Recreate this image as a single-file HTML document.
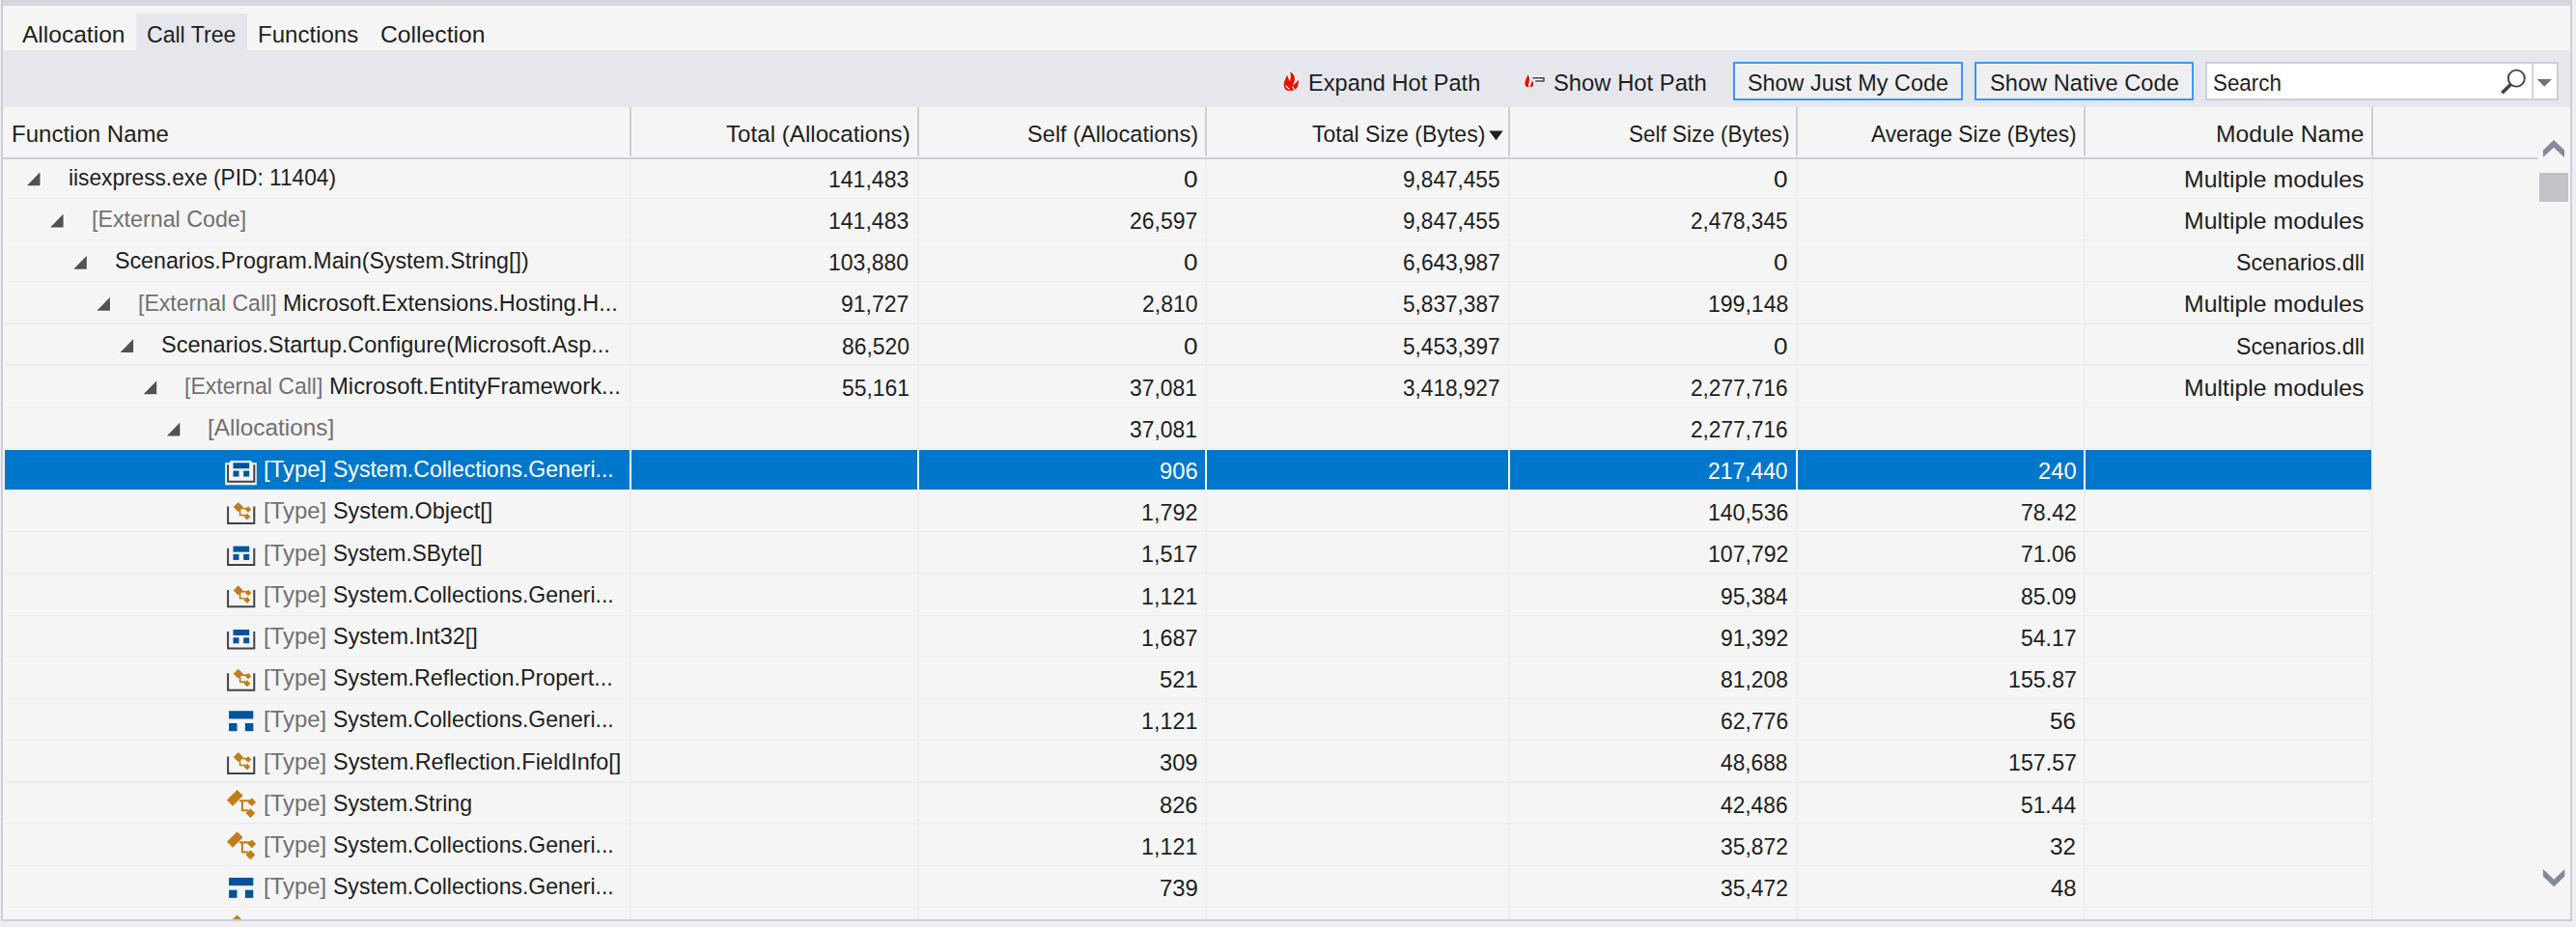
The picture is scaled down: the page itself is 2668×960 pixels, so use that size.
<!DOCTYPE html>
<html><head><meta charset="utf-8"><title>Call Tree</title>
<style>
html,body{margin:0;padding:0}
body{width:2668px;height:960px;overflow:hidden;position:relative;background:#eeeef3;font-family:"Liberation Sans",sans-serif}
.r{position:absolute}
.ov{position:absolute;left:0;top:0}
.t{position:absolute;font-size:24.5px;line-height:40px;white-space:nowrap;transform-origin:0 0}
</style></head><body>
<div class="r" style="left:3px;top:0px;width:2659px;height:6px;background:#d6d7dc;"></div><div class="r" style="left:3px;top:6px;width:2659px;height:46px;background:#f5f5f5;"></div><div class="r" style="left:141px;top:14px;width:115px;height:38px;background:#e6e7ed;"></div><div class="r" style="left:3px;top:52px;width:2659px;height:59px;background:#e6e7ed;"></div><div class="r" style="left:3px;top:111px;width:2659px;height:841px;background:#f5f5f5;"></div><div class="r" style="left:1px;top:0px;width:2px;height:954px;background:#cccedb;"></div><div class="r" style="left:2662px;top:0px;width:2px;height:954px;background:#cccedb;"></div><div class="r" style="left:1px;top:952px;width:2663px;height:2px;background:#cccedb;"></div><div class="r" style="left:652px;top:111px;width:2px;height:51px;background:#ccceda;"></div><div class="r" style="left:950px;top:111px;width:2px;height:51px;background:#ccceda;"></div><div class="r" style="left:1248px;top:111px;width:2px;height:51px;background:#ccceda;"></div><div class="r" style="left:1562px;top:111px;width:2px;height:51px;background:#ccceda;"></div><div class="r" style="left:1860px;top:111px;width:2px;height:51px;background:#ccceda;"></div><div class="r" style="left:2158px;top:111px;width:2px;height:51px;background:#ccceda;"></div><div class="r" style="left:2456px;top:111px;width:2px;height:51px;background:#ccceda;"></div><div class="r" style="left:3px;top:163px;width:2626px;height:2px;background:#cccedb;"></div><div class="r" style="left:5px;top:204.75px;width:2451px;height:1.3px;background:#ededed;"></div><div class="r" style="left:5px;top:247.93px;width:2451px;height:1.3px;background:#ededed;"></div><div class="r" style="left:5px;top:291.11px;width:2451px;height:1.3px;background:#ededed;"></div><div class="r" style="left:5px;top:334.29px;width:2451px;height:1.3px;background:#ededed;"></div><div class="r" style="left:5px;top:377.47px;width:2451px;height:1.3px;background:#ededed;"></div><div class="r" style="left:5px;top:420.65px;width:2451px;height:1.3px;background:#ededed;"></div><div class="r" style="left:5px;top:463.83px;width:2451px;height:1.3px;background:#ededed;"></div><div class="r" style="left:5px;top:507.01px;width:2451px;height:1.3px;background:#ededed;"></div><div class="r" style="left:5px;top:550.19px;width:2451px;height:1.3px;background:#ededed;"></div><div class="r" style="left:5px;top:593.37px;width:2451px;height:1.3px;background:#ededed;"></div><div class="r" style="left:5px;top:636.55px;width:2451px;height:1.3px;background:#ededed;"></div><div class="r" style="left:5px;top:679.73px;width:2451px;height:1.3px;background:#ededed;"></div><div class="r" style="left:5px;top:722.91px;width:2451px;height:1.3px;background:#ededed;"></div><div class="r" style="left:5px;top:766.09px;width:2451px;height:1.3px;background:#ededed;"></div><div class="r" style="left:5px;top:809.27px;width:2451px;height:1.3px;background:#ededed;"></div><div class="r" style="left:5px;top:852.45px;width:2451px;height:1.3px;background:#ededed;"></div><div class="r" style="left:5px;top:895.63px;width:2451px;height:1.3px;background:#ededed;"></div><div class="r" style="left:5px;top:938.81px;width:2451px;height:1.3px;background:#ededed;"></div><div class="r" style="left:5px;top:981.99px;width:2451px;height:1.3px;background:#ededed;"></div><div class="r" style="left:652px;top:165px;width:2px;height:787px;background:#eeeeee;"></div><div class="r" style="left:950px;top:165px;width:2px;height:787px;background:#eeeeee;"></div><div class="r" style="left:1248px;top:165px;width:2px;height:787px;background:#eeeeee;"></div><div class="r" style="left:1562px;top:165px;width:2px;height:787px;background:#eeeeee;"></div><div class="r" style="left:1860px;top:165px;width:2px;height:787px;background:#eeeeee;"></div><div class="r" style="left:2158px;top:165px;width:2px;height:787px;background:#eeeeee;"></div><div class="r" style="left:2456px;top:165px;width:2px;height:787px;background:#eeeeee;"></div><div class="r" style="left:5px;top:465px;width:2451px;height:43px;background:#fafafa;"></div><div class="r" style="left:5px;top:466px;width:647px;height:41px;background:#0177cc;"></div><div class="r" style="left:654px;top:466px;width:296px;height:41px;background:#0177cc;"></div><div class="r" style="left:952px;top:466px;width:296px;height:41px;background:#0177cc;"></div><div class="r" style="left:1250px;top:466px;width:312px;height:41px;background:#0177cc;"></div><div class="r" style="left:1564px;top:466px;width:296px;height:41px;background:#0177cc;"></div><div class="r" style="left:1862px;top:466px;width:296px;height:41px;background:#0177cc;"></div><div class="r" style="left:2160px;top:466px;width:296px;height:41px;background:#0177cc;"></div>
<svg class="ov" width="2668" height="960" viewBox="0 0 2668 960"><polygon points="25.30,193.60 42.80,176.00 42.80,193.60" fill="#ffffff" opacity="0.9"/><polygon points="27.90,192.30 41.50,178.30 41.50,192.30" fill="#525252"/><polygon points="49.45,236.78 66.95,219.18 66.95,236.78" fill="#ffffff" opacity="0.9"/><polygon points="52.05,235.48 65.65,221.48 65.65,235.48" fill="#525252"/><polygon points="73.60,279.96 91.10,262.36 91.10,279.96" fill="#ffffff" opacity="0.9"/><polygon points="76.20,278.66 89.80,264.66 89.80,278.66" fill="#525252"/><polygon points="97.75,323.14 115.25,305.54 115.25,323.14" fill="#ffffff" opacity="0.9"/><polygon points="100.35,321.84 113.95,307.84 113.95,321.84" fill="#525252"/><polygon points="121.90,366.32 139.40,348.72 139.40,366.32" fill="#ffffff" opacity="0.9"/><polygon points="124.50,365.02 138.10,351.02 138.10,365.02" fill="#525252"/><polygon points="146.05,409.50 163.55,391.90 163.55,409.50" fill="#ffffff" opacity="0.9"/><polygon points="148.65,408.20 162.25,394.20 162.25,408.20" fill="#525252"/><polygon points="170.20,452.68 187.70,435.08 187.70,452.68" fill="#ffffff" opacity="0.9"/><polygon points="172.80,451.38 186.40,437.38 186.40,451.38" fill="#525252"/><path d="M233.2 502.26 V479.26 H237.5 L239 476.96 H260 L261.5 479.26 H265.8 V502.26 Z" fill="#f5f5f5"/><path d="M236.1 481.36 V498.76 H263.3 V481.36" fill="none" stroke="#424242" stroke-width="2" stroke-linecap="butt"/><rect x="241.5" y="479.26" width="16.7" height="6" fill="#00539c"/><rect x="241.5" y="487.56" width="6" height="6" fill="#00539c"/><rect x="252.2" y="487.56" width="6" height="6" fill="#00539c"/><path d="M236.1 524.54 V541.94 H263.3 V524.54" fill="none" stroke="#424242" stroke-width="2" stroke-linecap="butt"/><path d="M248.6 525.44 V533.44 H254 M248.6 526.44 H256" fill="none" stroke="#c27d1a" stroke-width="1.6"/><rect x="243.20" y="521.44" width="7.20" height="7.20" fill="#c27d1a" transform="rotate(45 246.80 525.04)"/><rect x="254.80" y="525.24" width="4.60" height="4.60" fill="#c27d1a" transform="rotate(45 257.10 527.54)"/><rect x="253.50" y="532.64" width="4.80" height="4.80" fill="#c27d1a" transform="rotate(45 255.90 535.04)"/><path d="M236.1 567.72 V585.12 H263.3 V567.72" fill="none" stroke="#424242" stroke-width="2" stroke-linecap="butt"/><rect x="241.5" y="565.62" width="16.7" height="6" fill="#00539c"/><rect x="241.5" y="573.92" width="6" height="6" fill="#00539c"/><rect x="252.2" y="573.92" width="6" height="6" fill="#00539c"/><path d="M236.1 610.90 V628.30 H263.3 V610.90" fill="none" stroke="#424242" stroke-width="2" stroke-linecap="butt"/><path d="M248.6 611.80 V619.80 H254 M248.6 612.80 H256" fill="none" stroke="#c27d1a" stroke-width="1.6"/><rect x="243.20" y="607.80" width="7.20" height="7.20" fill="#c27d1a" transform="rotate(45 246.80 611.40)"/><rect x="254.80" y="611.60" width="4.60" height="4.60" fill="#c27d1a" transform="rotate(45 257.10 613.90)"/><rect x="253.50" y="619.00" width="4.80" height="4.80" fill="#c27d1a" transform="rotate(45 255.90 621.40)"/><path d="M236.1 654.08 V671.48 H263.3 V654.08" fill="none" stroke="#424242" stroke-width="2" stroke-linecap="butt"/><rect x="241.5" y="651.98" width="16.7" height="6" fill="#00539c"/><rect x="241.5" y="660.28" width="6" height="6" fill="#00539c"/><rect x="252.2" y="660.28" width="6" height="6" fill="#00539c"/><path d="M236.1 697.26 V714.66 H263.3 V697.26" fill="none" stroke="#424242" stroke-width="2" stroke-linecap="butt"/><path d="M248.6 698.16 V706.16 H254 M248.6 699.16 H256" fill="none" stroke="#c27d1a" stroke-width="1.6"/><rect x="243.20" y="694.16" width="7.20" height="7.20" fill="#c27d1a" transform="rotate(45 246.80 697.76)"/><rect x="254.80" y="697.96" width="4.60" height="4.60" fill="#c27d1a" transform="rotate(45 257.10 700.26)"/><rect x="253.50" y="705.36" width="4.80" height="4.80" fill="#c27d1a" transform="rotate(45 255.90 707.76)"/><rect x="237.1" y="736.24" width="25.2" height="8.2" fill="#00539c"/><rect x="237.1" y="748.94" width="8.4" height="8.2" fill="#00539c"/><rect x="253.9" y="748.94" width="8.4" height="8.2" fill="#00539c"/><path d="M236.1 783.62 V801.02 H263.3 V783.62" fill="none" stroke="#424242" stroke-width="2" stroke-linecap="butt"/><path d="M248.6 784.52 V792.52 H254 M248.6 785.52 H256" fill="none" stroke="#c27d1a" stroke-width="1.6"/><rect x="243.20" y="780.52" width="7.20" height="7.20" fill="#c27d1a" transform="rotate(45 246.80 784.12)"/><rect x="254.80" y="784.32" width="4.60" height="4.60" fill="#c27d1a" transform="rotate(45 257.10 786.62)"/><rect x="253.50" y="791.72" width="4.80" height="4.80" fill="#c27d1a" transform="rotate(45 255.90 794.12)"/><path d="M250.9 829.20 V839.30 H257 M248 829.20 H259" fill="none" stroke="#c27d1a" stroke-width="2.1"/><rect x="235.80" y="822.00" width="15.00" height="8.60" fill="#c27d1a" transform="rotate(-45 243.30 826.30)"/><rect x="257.70" y="827.60" width="6.20" height="6.20" fill="#c27d1a" transform="rotate(45 260.80 830.70)"/><rect x="255.90" y="838.60" width="7.00" height="7.00" fill="#c27d1a" transform="rotate(45 259.40 842.10)"/><path d="M250.9 872.38 V882.48 H257 M248 872.38 H259" fill="none" stroke="#c27d1a" stroke-width="2.1"/><rect x="235.80" y="865.18" width="15.00" height="8.60" fill="#c27d1a" transform="rotate(-45 243.30 869.48)"/><rect x="257.70" y="870.78" width="6.20" height="6.20" fill="#c27d1a" transform="rotate(45 260.80 873.88)"/><rect x="255.90" y="881.78" width="7.00" height="7.00" fill="#c27d1a" transform="rotate(45 259.40 885.28)"/><rect x="237.1" y="908.96" width="25.2" height="8.2" fill="#00539c"/><rect x="237.1" y="921.66" width="8.4" height="8.2" fill="#00539c"/><rect x="253.9" y="921.66" width="8.4" height="8.2" fill="#00539c"/><path d="M250.9 958.74 V968.84 H257 M248 958.74 H259" fill="none" stroke="#c27d1a" stroke-width="2.1"/><rect x="235.80" y="951.54" width="15.00" height="8.60" fill="#c27d1a" transform="rotate(-45 243.30 955.84)"/><rect x="257.70" y="957.14" width="6.20" height="6.20" fill="#c27d1a" transform="rotate(45 260.80 960.24)"/><rect x="255.90" y="968.14" width="7.00" height="7.00" fill="#c27d1a" transform="rotate(45 259.40 971.64)"/><polygon points="1542.3,135.5 1556.7,135.5 1549.5,145.3" fill="#1e1e1e"/><polygon points="2633.9,155.4 2644.9,145.1 2656,155.4 2656,162.9 2644.9,152.7 2633.9,162.9" fill="#868999"/><polygon points="2633.9,899.9 2645.1,910.7 2656.3,899.9 2656.3,907.5 2645.1,918.3 2633.9,907.5" fill="#868999"/><rect x="2630" y="179" width="30" height="30" fill="#c2c3c9"/><rect x="1796" y="65" width="236" height="38" fill="#efeff2" stroke="#3399ff" stroke-width="2"/><rect x="2046" y="65" width="225" height="38" fill="#efeff2" stroke="#3399ff" stroke-width="2"/><rect x="2285" y="65" width="364" height="38" fill="#ffffff" stroke="#cccedb" stroke-width="2"/><rect x="2622.2" y="66" width="1.8" height="36" fill="#cccedb"/><polygon points="2627.6,82 2642.9,82 2635.25,89.8" fill="#717171"/><circle cx="2606.3" cy="81.1" r="8.5" fill="none" stroke="#424242" stroke-width="1.9"/><line x1="2591.4" y1="96.3" x2="2600.8" y2="86.9" stroke="#424242" stroke-width="3.6"/><g transform="translate(1329.3,73.9) scale(1.0)"><path d="M3.2 19.5 C1.0 18.5 0 15.5 0.3 13 C0.6 9.5 2.8 7 3.6 3.1 C4.8 5 6 7.5 6.5 10 C7.5 7 7.8 3 6.9 0.1 C9.8 2 11.8 4.5 11.7 7.5 C11.6 10.5 10.6 12.5 9.8 14.5 C11.8 13 14 11 15.4 8.6 C16 12 15.5 15 14 17 C12.5 19 10 20 7.5 20 C5.5 20 4.2 19.9 3.2 19.5 Z" fill="#e51400" stroke="#ffffff" stroke-width="1.4" paint-order="stroke"/><path d="M2.3 14.6 C3.2 16.3 4.6 17.6 6.3 18.6 M9.2 15.6 C9.7 16.8 10.4 17.7 11.3 18.6 M4.2 3.6 C5.2 5.2 6.0 7.2 6.5 9.6" fill="none" stroke="#ffffff" stroke-width="1.1"/></g><g fill="#e51400" stroke="#ffffff" stroke-width="1.3" paint-order="stroke"><path d="M1580.6 89.8 C1579.0 88.2 1578.9 85.5 1580.0 82.8 C1580.8 80.9 1582.0 79.2 1582.1 77.1 C1583.6 78.6 1584.4 80.8 1584.1 83.4 C1583.8 85.4 1582.8 86.8 1583.0 88.6 C1583.1 89.4 1583.6 90.0 1584.2 90.2 C1583 90.4 1581.5 90.3 1580.6 89.8 Z"/><path d="M1586.6 83.1 C1588.4 84.9 1588.8 88.0 1587.2 89.7 C1586.6 90.2 1585.6 90.4 1584.6 90.3 C1585.0 89.3 1585.0 88.2 1585.5 87.2 C1586.1 86.0 1586.7 84.8 1586.6 83.1 Z"/></g><path d="M1587.5 80.8 H1599 V84.1 H1590.2" fill="none" stroke="#ffffff" stroke-width="3.2" opacity="0.7"/><path d="M1587.5 80.8 H1599 V84.1 H1590.2" fill="none" stroke="#424242" stroke-width="1.5"/></svg>
<div class="t" style="left:22.95px;top:15.80px;color:#1e1e1e;transform:scaleX(1.0020)">Allocation</div>
<div class="t" style="left:152.13px;top:15.80px;color:#1e1e1e;transform:scaleX(0.9413)">Call Tree</div>
<div class="t" style="left:267.03px;top:15.80px;color:#1e1e1e;transform:scaleX(0.9814)">Functions</div>
<div class="t" style="left:394.25px;top:15.80px;color:#1e1e1e;transform:scaleX(1.0080)">Collection</div>
<div class="t" style="left:1355.07px;top:66.00px;color:#1e1e1e;transform:scaleX(0.9624)">Expand Hot Path</div>
<div class="t" style="left:1608.72px;top:66.00px;color:#1e1e1e;transform:scaleX(0.9712)">Show Hot Path</div>
<div class="t" style="left:1809.94px;top:65.70px;color:#1e1e1e;transform:scaleX(0.9542)">Show Just My Code</div>
<div class="t" style="left:2060.73px;top:65.70px;color:#1e1e1e;transform:scaleX(0.9650)">Show Native Code</div>
<div class="t" style="left:2291.88px;top:65.90px;color:#1e1e1e;transform:scaleX(0.9128)">Search</div>
<div class="t" style="left:12.03px;top:119.00px;color:#1e1e1e;transform:scaleX(0.9807)">Function Name</div>
<div class="t" style="left:752.26px;top:119.00px;color:#1e1e1e;transform:scaleX(0.9865)">Total (Allocations)</div>
<div class="t" style="left:1063.63px;top:119.00px;color:#1e1e1e;transform:scaleX(0.9636)">Self (Allocations)</div>
<div class="t" style="left:1359.38px;top:119.00px;color:#1e1e1e;transform:scaleX(0.9408)">Total Size (Bytes)</div>
<div class="t" style="left:1686.88px;top:119.00px;color:#1e1e1e;transform:scaleX(0.9190)">Self Size (Bytes)</div>
<div class="t" style="left:1937.76px;top:119.00px;color:#1e1e1e;transform:scaleX(0.9258)">Average Size (Bytes)</div>
<div class="t" style="left:2295.08px;top:119.00px;color:#1e1e1e;transform:scaleX(1.0066)">Module Name</div>
<div class="t" style="left:70.68px;top:164.00px;color:#1e1e1e;transform:scaleX(0.9261)">iisexpress.exe (PID: 11404)</div>
<div class="t" style="left:858.25px;top:165.80px;color:#1e1e1e;transform:scaleX(0.9402)">141,483</div>
<div class="t" style="left:1225.78px;top:165.80px;color:#1e1e1e;transform:scaleX(1.0660)">0</div>
<div class="t" style="left:1453.24px;top:165.80px;color:#1e1e1e;transform:scaleX(0.9221)">9,847,455</div>
<div class="t" style="left:1837.38px;top:165.80px;color:#1e1e1e;transform:scaleX(1.0660)">0</div>
<div class="t" style="left:2261.86px;top:165.80px;color:#1e1e1e;transform:scaleX(1.0141)">Multiple modules</div>
<div class="t" style="left:95.34px;top:207.18px;color:#717171;transform:scaleX(0.9487)">[External Code]</div>
<div class="t" style="left:858.25px;top:208.98px;color:#1e1e1e;transform:scaleX(0.9402)">141,483</div>
<div class="t" style="left:1170.14px;top:208.98px;color:#1e1e1e;transform:scaleX(0.9383)">26,597</div>
<div class="t" style="left:1453.24px;top:208.98px;color:#1e1e1e;transform:scaleX(0.9221)">9,847,455</div>
<div class="t" style="left:1751.26px;top:208.98px;color:#1e1e1e;transform:scaleX(0.9228)">2,478,345</div>
<div class="t" style="left:2261.86px;top:208.98px;color:#1e1e1e;transform:scaleX(1.0141)">Multiple modules</div>
<div class="t" style="left:119.45px;top:250.36px;color:#1e1e1e;transform:scaleX(0.9482)">Scenarios.Program.Main(System.String[])</div>
<div class="t" style="left:858.25px;top:252.16px;color:#1e1e1e;transform:scaleX(0.9389)">103,880</div>
<div class="t" style="left:1225.78px;top:252.16px;color:#1e1e1e;transform:scaleX(1.0660)">0</div>
<div class="t" style="left:1453.15px;top:252.16px;color:#1e1e1e;transform:scaleX(0.9247)">6,643,987</div>
<div class="t" style="left:1837.38px;top:252.16px;color:#1e1e1e;transform:scaleX(1.0660)">0</div>
<div class="t" style="left:2315.95px;top:252.16px;color:#1e1e1e;transform:scaleX(0.9483)">Scenarios.dll</div>
<div class="t" style="left:143.06px;top:293.54px;color:#717171;transform:scaleX(0.9415)">[External Call]</div>
<div class="t" style="left:292.57px;top:293.54px;color:#1e1e1e;transform:scaleX(0.9614)">Microsoft.Extensions.Hosting.H...</div>
<div class="t" style="left:871.42px;top:295.34px;color:#1e1e1e;transform:scaleX(0.9372)">91,727</div>
<div class="t" style="left:1182.64px;top:295.34px;color:#1e1e1e;transform:scaleX(0.9387)">2,810</div>
<div class="t" style="left:1453.40px;top:295.34px;color:#1e1e1e;transform:scaleX(0.9224)">5,837,387</div>
<div class="t" style="left:1768.65px;top:295.34px;color:#1e1e1e;transform:scaleX(0.9401)">199,148</div>
<div class="t" style="left:2261.86px;top:295.34px;color:#1e1e1e;transform:scaleX(1.0141)">Multiple modules</div>
<div class="t" style="left:166.93px;top:336.72px;color:#1e1e1e;transform:scaleX(0.9590)">Scenarios.Startup.Configure(Microsoft.Asp...</div>
<div class="t" style="left:871.51px;top:338.52px;color:#1e1e1e;transform:scaleX(0.9326)">86,520</div>
<div class="t" style="left:1225.78px;top:338.52px;color:#1e1e1e;transform:scaleX(1.0660)">0</div>
<div class="t" style="left:1453.40px;top:338.52px;color:#1e1e1e;transform:scaleX(0.9224)">5,453,397</div>
<div class="t" style="left:1837.38px;top:338.52px;color:#1e1e1e;transform:scaleX(1.0660)">0</div>
<div class="t" style="left:2315.95px;top:338.52px;color:#1e1e1e;transform:scaleX(0.9483)">Scenarios.dll</div>
<div class="t" style="left:191.26px;top:379.90px;color:#717171;transform:scaleX(0.9401)">[External Call]</div>
<div class="t" style="left:340.55px;top:379.90px;color:#1e1e1e;transform:scaleX(0.9727)">Microsoft.EntityFramework...</div>
<div class="t" style="left:871.58px;top:381.70px;color:#1e1e1e;transform:scaleX(0.9346)">55,161</div>
<div class="t" style="left:1170.43px;top:381.70px;color:#1e1e1e;transform:scaleX(0.9340)">37,081</div>
<div class="t" style="left:1453.44px;top:381.70px;color:#1e1e1e;transform:scaleX(0.9220)">3,418,927</div>
<div class="t" style="left:1751.26px;top:381.70px;color:#1e1e1e;transform:scaleX(0.9232)">2,277,716</div>
<div class="t" style="left:2261.86px;top:381.70px;color:#1e1e1e;transform:scaleX(1.0141)">Multiple modules</div>
<div class="t" style="left:214.97px;top:423.08px;color:#717171;transform:scaleX(0.9929)">[Allocations]</div>
<div class="t" style="left:1170.43px;top:424.88px;color:#1e1e1e;transform:scaleX(0.9340)">37,081</div>
<div class="t" style="left:1751.26px;top:424.88px;color:#1e1e1e;transform:scaleX(0.9232)">2,277,716</div>
<div class="t" style="left:272.79px;top:466.26px;color:#ffffff;transform:scaleX(0.9772)">[Type]</div>
<div class="t" style="left:344.75px;top:466.26px;color:#ffffff;transform:scaleX(0.9407)">System.Collections.Generi...</div>
<div class="t" style="left:1200.69px;top:468.06px;color:#ffffff;transform:scaleX(0.9699)">906</div>
<div class="t" style="left:1769.25px;top:468.06px;color:#ffffff;transform:scaleX(0.9320)">217,440</div>
<div class="t" style="left:2110.61px;top:468.06px;color:#ffffff;transform:scaleX(0.9690)">240</div>
<div class="t" style="left:272.79px;top:509.44px;color:#717171;transform:scaleX(0.9772)">[Type]</div>
<div class="t" style="left:344.74px;top:509.44px;color:#1e1e1e;transform:scaleX(0.9561)">System.Object[]</div>
<div class="t" style="left:1182.02px;top:511.24px;color:#1e1e1e;transform:scaleX(0.9534)">1,792</div>
<div class="t" style="left:1768.65px;top:511.24px;color:#1e1e1e;transform:scaleX(0.9402)">140,536</div>
<div class="t" style="left:2092.61px;top:511.24px;color:#1e1e1e;transform:scaleX(0.9435)">78.42</div>
<div class="t" style="left:272.79px;top:552.62px;color:#717171;transform:scaleX(0.9772)">[Type]</div>
<div class="t" style="left:344.77px;top:552.62px;color:#1e1e1e;transform:scaleX(0.9228)">System.SByte[]</div>
<div class="t" style="left:1182.02px;top:554.42px;color:#1e1e1e;transform:scaleX(0.9534)">1,517</div>
<div class="t" style="left:1768.64px;top:554.42px;color:#1e1e1e;transform:scaleX(0.9419)">107,792</div>
<div class="t" style="left:2092.62px;top:554.42px;color:#1e1e1e;transform:scaleX(0.9410)">71.06</div>
<div class="t" style="left:272.79px;top:595.80px;color:#717171;transform:scaleX(0.9772)">[Type]</div>
<div class="t" style="left:344.75px;top:595.80px;color:#1e1e1e;transform:scaleX(0.9407)">System.Collections.Generi...</div>
<div class="t" style="left:1182.02px;top:597.60px;color:#1e1e1e;transform:scaleX(0.9528)">1,121</div>
<div class="t" style="left:1781.83px;top:597.60px;color:#1e1e1e;transform:scaleX(0.9306)">95,384</div>
<div class="t" style="left:2092.80px;top:597.60px;color:#1e1e1e;transform:scaleX(0.9393)">85.09</div>
<div class="t" style="left:272.79px;top:638.98px;color:#717171;transform:scaleX(0.9772)">[Type]</div>
<div class="t" style="left:344.74px;top:638.98px;color:#1e1e1e;transform:scaleX(0.9567)">System.Int32[]</div>
<div class="t" style="left:1182.02px;top:640.78px;color:#1e1e1e;transform:scaleX(0.9534)">1,687</div>
<div class="t" style="left:1781.82px;top:640.78px;color:#1e1e1e;transform:scaleX(0.9372)">91,392</div>
<div class="t" style="left:2092.88px;top:640.78px;color:#1e1e1e;transform:scaleX(0.9391)">54.17</div>
<div class="t" style="left:272.79px;top:682.16px;color:#717171;transform:scaleX(0.9772)">[Type]</div>
<div class="t" style="left:344.74px;top:682.16px;color:#1e1e1e;transform:scaleX(0.9497)">System.Reflection.Propert...</div>
<div class="t" style="left:1200.85px;top:683.96px;color:#1e1e1e;transform:scaleX(0.9687)">521</div>
<div class="t" style="left:1781.91px;top:683.96px;color:#1e1e1e;transform:scaleX(0.9340)">81,208</div>
<div class="t" style="left:2079.53px;top:683.96px;color:#1e1e1e;transform:scaleX(0.9466)">155.87</div>
<div class="t" style="left:272.79px;top:725.34px;color:#717171;transform:scaleX(0.9772)">[Type]</div>
<div class="t" style="left:344.75px;top:725.34px;color:#1e1e1e;transform:scaleX(0.9407)">System.Collections.Generi...</div>
<div class="t" style="left:1182.02px;top:727.14px;color:#1e1e1e;transform:scaleX(0.9528)">1,121</div>
<div class="t" style="left:1781.73px;top:727.14px;color:#1e1e1e;transform:scaleX(0.9364)">62,776</div>
<div class="t" style="left:2123.33px;top:727.14px;color:#1e1e1e;transform:scaleX(0.9917)">56</div>
<div class="t" style="left:272.79px;top:768.52px;color:#717171;transform:scaleX(0.9772)">[Type]</div>
<div class="t" style="left:344.74px;top:768.52px;color:#1e1e1e;transform:scaleX(0.9564)">System.Reflection.FieldInfo[]</div>
<div class="t" style="left:1200.90px;top:770.32px;color:#1e1e1e;transform:scaleX(0.9666)">309</div>
<div class="t" style="left:1782.38px;top:770.32px;color:#1e1e1e;transform:scaleX(0.9276)">48,688</div>
<div class="t" style="left:2079.53px;top:770.32px;color:#1e1e1e;transform:scaleX(0.9466)">157.57</div>
<div class="t" style="left:272.79px;top:811.70px;color:#717171;transform:scaleX(0.9772)">[Type]</div>
<div class="t" style="left:344.75px;top:811.70px;color:#1e1e1e;transform:scaleX(0.9445)">System.String</div>
<div class="t" style="left:1200.77px;top:813.50px;color:#1e1e1e;transform:scaleX(0.9678)">826</div>
<div class="t" style="left:1782.38px;top:813.50px;color:#1e1e1e;transform:scaleX(0.9277)">42,486</div>
<div class="t" style="left:2092.89px;top:813.50px;color:#1e1e1e;transform:scaleX(0.9310)">51.44</div>
<div class="t" style="left:272.79px;top:854.88px;color:#717171;transform:scaleX(0.9772)">[Type]</div>
<div class="t" style="left:344.75px;top:854.88px;color:#1e1e1e;transform:scaleX(0.9407)">System.Collections.Generi...</div>
<div class="t" style="left:1182.02px;top:856.68px;color:#1e1e1e;transform:scaleX(0.9528)">1,121</div>
<div class="t" style="left:1782.03px;top:856.68px;color:#1e1e1e;transform:scaleX(0.9344)">35,872</div>
<div class="t" style="left:2123.37px;top:856.68px;color:#1e1e1e;transform:scaleX(0.9960)">32</div>
<div class="t" style="left:272.79px;top:898.06px;color:#717171;transform:scaleX(0.9772)">[Type]</div>
<div class="t" style="left:344.75px;top:898.06px;color:#1e1e1e;transform:scaleX(0.9407)">System.Collections.Generi...</div>
<div class="t" style="left:1200.58px;top:899.86px;color:#1e1e1e;transform:scaleX(0.9747)">739</div>
<div class="t" style="left:1782.03px;top:899.86px;color:#1e1e1e;transform:scaleX(0.9344)">35,472</div>
<div class="t" style="left:2123.75px;top:899.86px;color:#1e1e1e;transform:scaleX(0.9751)">48</div>
<div class="t" style="left:272.79px;top:941.24px;color:#717171;transform:scaleX(0.9772)">[Type]</div>
<div class="t" style="left:344.75px;top:941.24px;color:#1e1e1e;transform:scaleX(0.9400)">System.Reflection.RuntimeFieldInfo</div>
<div class="r" style="left:0;top:952px;width:2668px;height:8px;background:#eeeef3"></div>
<div class="r" style="left:1px;top:952px;width:2663px;height:2px;background:#cccedb"></div>
</body></html>
